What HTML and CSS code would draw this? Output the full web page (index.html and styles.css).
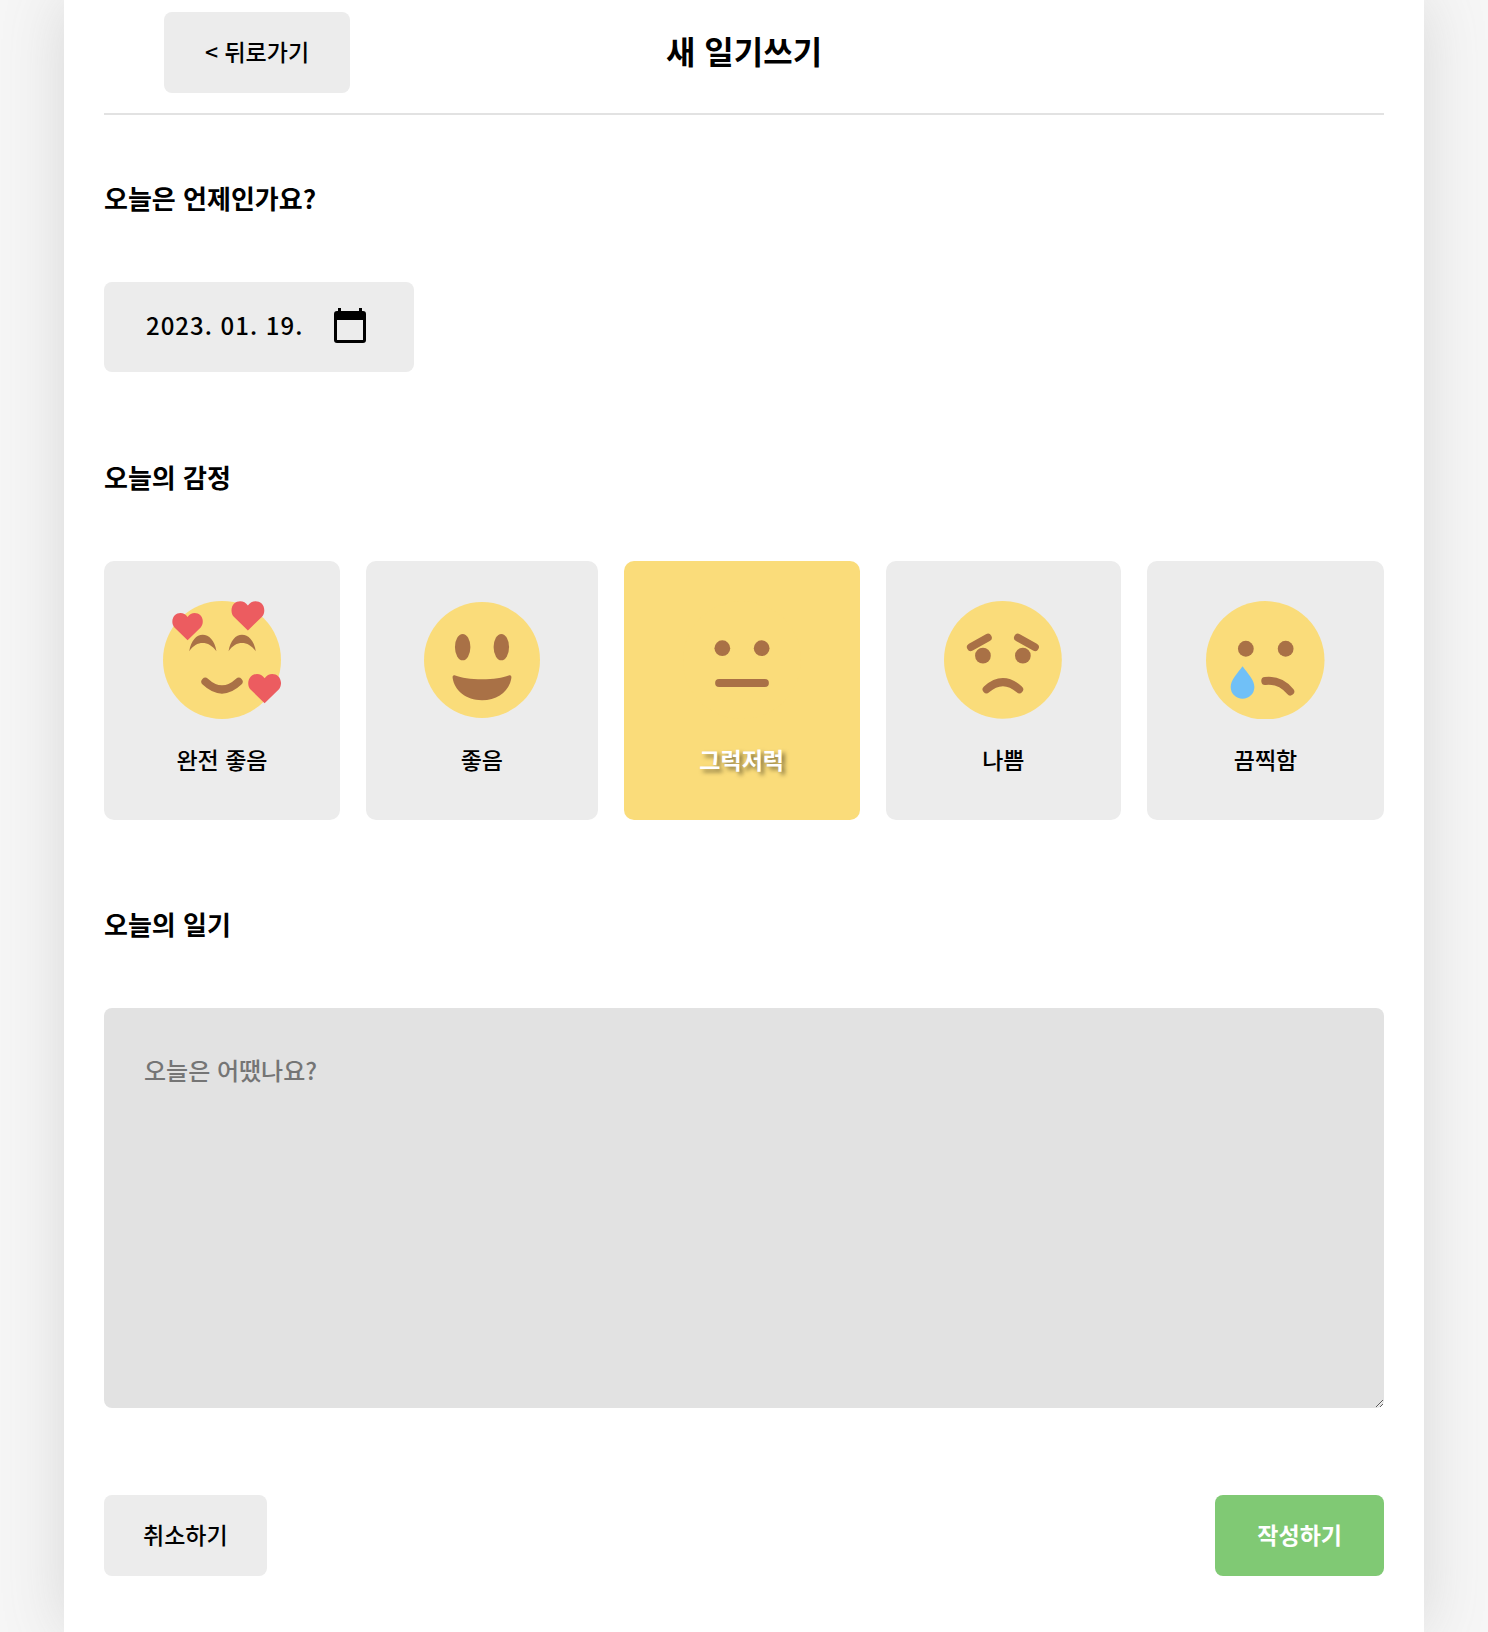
FILE: index.html
```html
<!DOCTYPE html>
<html lang="ko">
<head>
    <meta charset="UTF-8">
    <meta name="viewport" content="width=device-width, initial-scale=1.0">
    <title>새 일기쓰기</title>
    <link rel="stylesheet" href="styles.css">
</head>
<body>
    <div class="app">
        <header class="page-head">
            <div class="head-left"><button class="btn back-btn">&lt; 뒤로가기</button></div>
            <h1>새 일기쓰기</h1>
            <div></div>
        </header>

        <section class="first-section">
            <h2>오늘은 언제인가요?</h2>
            <div class="date-box">
                <span>2023. 01. 19.</span>
                <svg class="calendar" viewBox="0 0 32 35"><path fill-rule="evenodd" d="M4 3V0h3v3h18V0h3v3h1a3 3 0 0 1 3 3v26a3 3 0 0 1-3 3H3a3 3 0 0 1-3-3V6a3 3 0 0 1 3-3zM3 12v20h26V12z"/></svg>
            </div>
        </section>

        <section class="mood-section">
            <h2>오늘의 감정</h2>
            <div class="emotions">
                <div class="emotion">
                    <div class="face">
                        <svg viewBox="0 0 36 36">
                            <circle class="skin" cx="18" cy="18" r="18"/>
                            <path class="brown" d="M8 15.3C8.6 12 10.2 10.3 12.1 10.3S15.8 12 16.3 15.3C15 13.6 13.6 12.8 12.1 12.8S9.2 13.6 8 15.3Z"/>
                            <path class="brown" d="M20 15.3C20.6 12 22.2 10.3 24.1 10.3S27.8 12 28.3 15.3C27 13.6 25.6 12.8 24.1 12.8S21.2 13.6 20 15.3Z"/>
                            <path class="line" d="M12.9 24.6Q18 29.4 23.1 24.6"/>
                            <path class="heart" transform="translate(2.85 3.6) scale(.93)" d="M5 9L.7 4.8C-.3 3.7-.2 1.8.8.8C2-.3 4-.2 5 1.4C6-.2 8-.3 9.2.8C10.2 1.8 10.3 3.7 9.3 4.8Z"/>
                            <path class="heart" transform="translate(20.9 0)" d="M5 9L.7 4.8C-.3 3.7-.2 1.8.8.8C2-.3 4-.2 5 1.4C6-.2 8-.3 9.2.8C10.2 1.8 10.3 3.7 9.3 4.8Z"/>
                            <path class="heart" transform="translate(26 22.2)" d="M5 9L.7 4.8C-.3 3.7-.2 1.8.8.8C2-.3 4-.2 5 1.4C6-.2 8-.3 9.2.8C10.2 1.8 10.3 3.7 9.3 4.8Z"/>
                        </svg>
                    </div>
                    <span>완전 좋음</span>
                </div>
                <div class="emotion">
                    <div class="face">
                        <svg viewBox="0 0 36 36">
                            <circle class="skin" cx="18" cy="18" r="18"/>
                            <ellipse class="brown" cx="12" cy="14" rx="2.4" ry="4.1"/>
                            <ellipse class="brown" cx="24" cy="14" rx="2.4" ry="4.1"/>
                            <path class="brown" d="M18 24C14.5 24 11.5 23.5 9.7 22.8C9 22.6 8.8 23 8.9 23.7C9.5 27.5 13 30.5 18 30.5S26.5 27.5 27.1 23.7C27.2 23 27 22.6 26.3 22.8C24.5 23.5 21.5 24 18 24Z"/>
                        </svg>
                    </div>
                    <span>좋음</span>
                </div>
                <div class="emotion selected">
                    <div class="face">
                        <svg viewBox="0 0 36 36">
                            <circle class="skin" cx="18" cy="18" r="18"/>
                            <circle class="brown" cx="12" cy="14.4" r="2.4"/>
                            <circle class="brown" cx="24" cy="14.4" r="2.4"/>
                            <path class="line" d="M11 25H25"/>
                        </svg>
                    </div>
                    <span>그럭저럭</span>
                </div>
                <div class="emotion">
                    <div class="face">
                        <svg viewBox="0 0 36 36">
                            <circle class="skin" cx="18" cy="18" r="18"/>
                            <path class="line" d="M8.2 14.1L13.4 11.2M27.8 14.1L22.6 11.2"/>
                            <circle class="brown" cx="11.9" cy="16.7" r="2.4"/>
                            <circle class="brown" cx="24.1" cy="16.7" r="2.4"/>
                            <path class="line" d="M13 27Q18 22.6 23 27"/>
                        </svg>
                    </div>
                    <span>나쁨</span>
                </div>
                <div class="emotion">
                    <div class="face">
                        <svg viewBox="0 0 36 36">
                            <circle class="skin" cx="18" cy="18" r="18"/>
                            <circle class="brown" cx="12.1" cy="14.5" r="2.4"/>
                            <circle class="brown" cx="24.2" cy="14.5" r="2.4"/>
                            <path class="tear" d="M11.1 19.8C9.5 22 7.5 24 7.5 26.1a3.6 3.6 0 0 0 7.2 0C14.7 24 12.7 22 11.1 19.8Z"/>
                            <path class="line" d="M18 24.3Q22.5 23.8 25.6 27.5"/>
                        </svg>
                    </div>
                    <span>끔찍함</span>
                </div>
            </div>
        </section>

        <section>
            <h2>오늘의 일기</h2>
            <textarea placeholder="오늘은 어땠나요?"></textarea>
        </section>

        <div class="page-foot">
            <button class="btn">취소하기</button>
            <button class="btn submit-btn">작성하기</button>
        </div>
    </div>
</body>
</html>
```

FILE: styles.css
```css
* {
  margin: 0;
  padding: 0;
  box-sizing: border-box;
  font-family: "Noto Sans CJK KR", "Noto Sans", sans-serif;
}

body {
  background-color: #f6f6f6;
  color: #000;
}

.app {
  width: 1360px;
  margin: 0 auto;
  padding: 12px 40px 56px;
  background-color: white;
  box-shadow: 0 0 60px rgba(100, 100, 100, 0.2);
}

.page-head {
  display: grid;
  grid-template-columns: 1fr auto 1fr;
  align-items: center;
  padding-bottom: 20px;
  border-bottom: 2px solid #e2e2e2;
}

.head-left {
  padding-left: 60px;
}

h1 {
  padding-bottom: 5px;
  font-size: 32px;
  font-weight: 700;
}

h2 {
  height: 40px;
  line-height: 40px;
  margin-bottom: 64px;
  font-size: 26px;
  font-weight: 700;
}

section {
  margin-top: 84px;
}

.first-section {
  margin-top: 63px;
}

.mood-section {
  margin-top: 85px;
}

.btn {
  height: 81px;
  padding: 0 39px 4px;
  background-color: #ececec;
  border: none;
  border-radius: 8px;
  font-size: 23px;
  font-weight: 500;
  cursor: pointer;
}

.back-btn {
  width: 186px;
  padding: 0 0 4px;
}

.date-box {
  display: flex;
  align-items: center;
  width: 310px;
  height: 90px;
  padding-left: 42px;
  background-color: #ececec;
  border-radius: 8px;
  font-size: 24px;
  font-weight: 500;
  letter-spacing: 1px;
}

.date-box span {
  padding-bottom: 5px;
}

.calendar {
  width: 32px;
  height: 35px;
  margin: 0 48px 3px auto;
}

.emotions {
  display: grid;
  grid-template-columns: 236px 232px 236px 235.6px 237px;
  justify-content: space-between;
}

.emotion {
  display: flex;
  flex-direction: column;
  align-items: center;
  height: 259px;
  padding-top: 40px;
  background-color: #ececec;
  border-radius: 10px;
  font-size: 23px;
  font-weight: 500;
  cursor: pointer;
}

.emotion span {
  margin-top: 23px;
}

.face {
  display: flex;
  align-items: center;
  justify-content: center;
  width: 100%;
  height: 118px;
}

.face svg {
  display: block;
  width: 50%;
}

.selected {
  background-color: #fadc7a;
  color: white;
  font-weight: 700;
}

.selected span {
  text-shadow: 3px 3px 4px rgba(0, 0, 0, 0.5);
}

.skin {
  fill: #fadc7a;
}

.brown {
  fill: #a97146;
}

.line {
  fill: none;
  stroke: #a97146;
  stroke-width: 2.4;
  stroke-linecap: round;
}

.heart {
  fill: #ec5c60;
}

.tear {
  fill: #70c0f7;
}

textarea {
  display: block;
  width: 100%;
  height: 400px;
  padding: 44px 40px;
  background-color: #e2e2e2;
  border: none;
  border-radius: 8px;
  font-size: 24px;
  font-weight: 500;
}

.page-foot {
  display: flex;
  justify-content: space-between;
  margin-top: 87px;
}

.submit-btn {
  padding: 0 42px 4px;
  background-color: #80c974;
  color: white;
  font-weight: 700;
}
```
